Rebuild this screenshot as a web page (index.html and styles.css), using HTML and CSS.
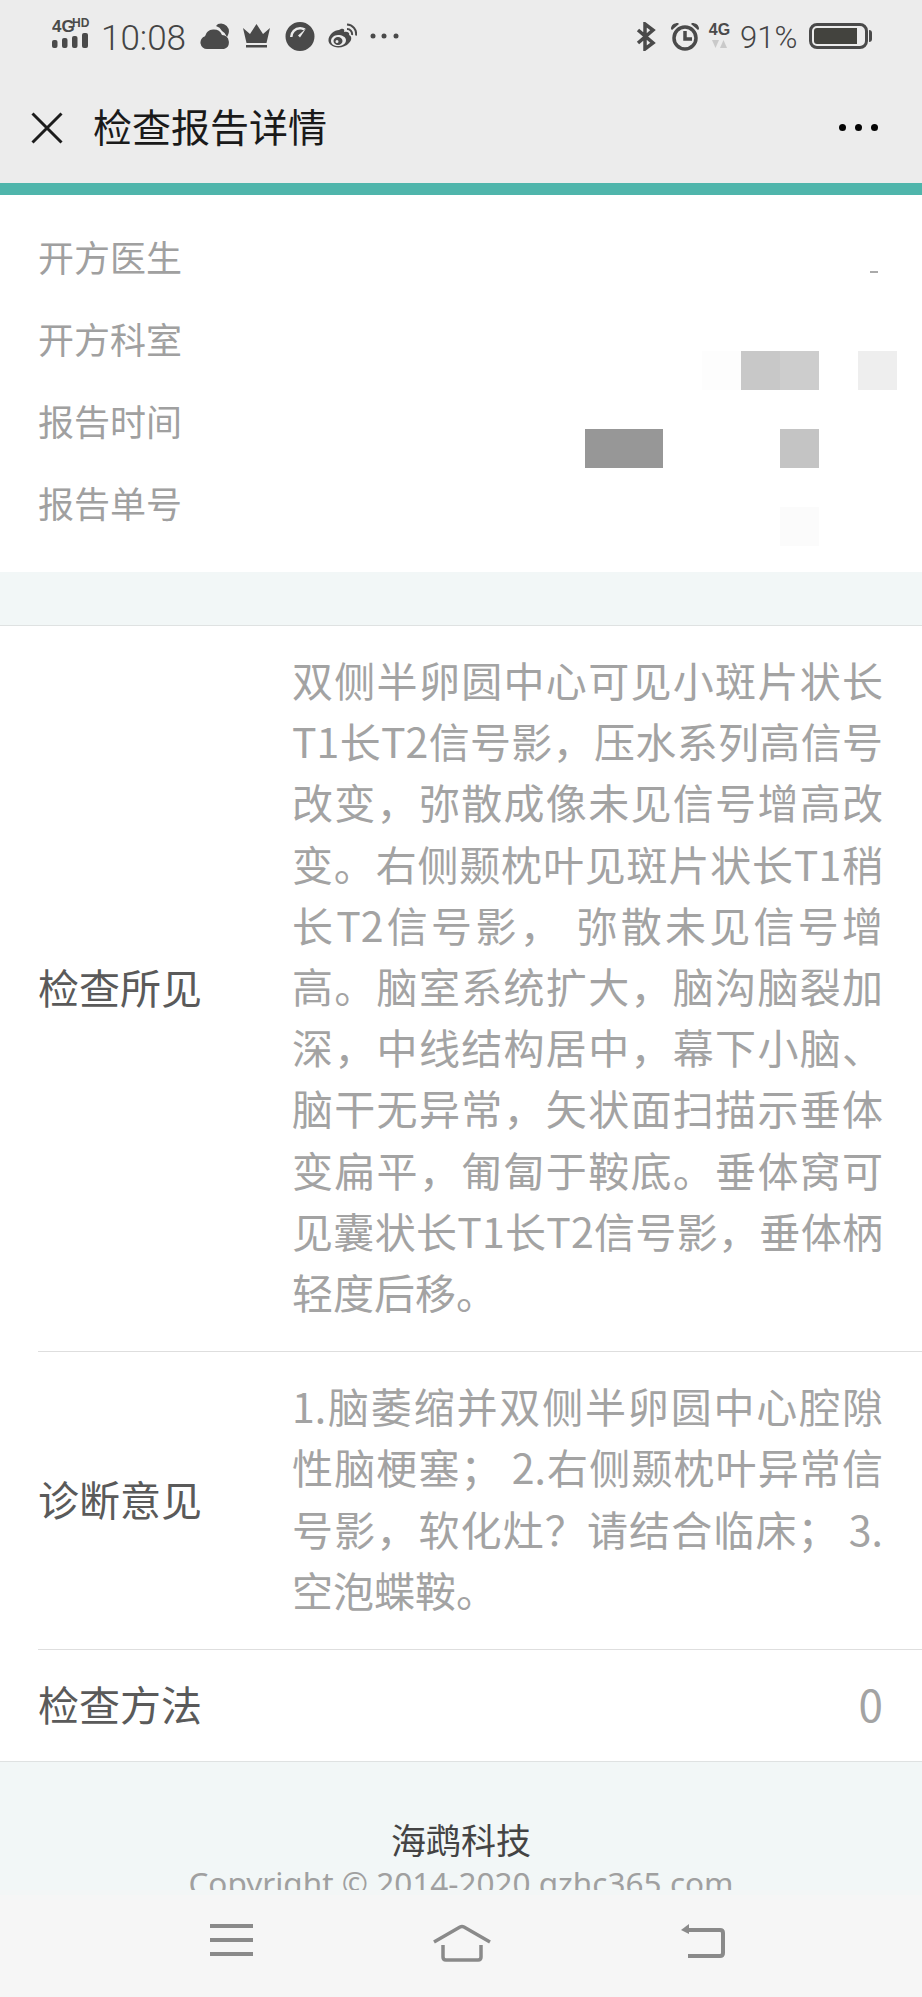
FILE: index.html
```html
<!DOCTYPE html>
<html lang="zh-CN">
<head>
    <meta charset="UTF-8">
    <meta name="viewport" content="width=device-width, initial-scale=1.0">
    <title>检查报告详情</title>
    <link rel="stylesheet" href="styles.css">
</head>

<body>
    <div class="phone">
        <div class="status-bar">
            <div class="status-left">
                <svg class="icon-signal" width="38" height="36" viewBox="0 0 38 36">
                    <text x="0" y="16" class="net-big">4G</text>
                    <text x="20" y="11" class="net-small">HD</text>
                    <rect x="0" y="24" width="5.500" height="8" rx="2"/>
                    <rect x="10" y="22" width="5.500" height="10" rx="2"/>
                    <rect x="20" y="20" width="5.500" height="12" rx="2"/>
                    <rect x="30" y="17" width="6" height="15" rx="2"/>
                </svg>
                <span class="clock">10:08</span>
                <svg class="icon-cloud" width="30" height="27" viewBox="0 0 30 27">
                    <path d="M18 1a8 8 0 0 1 10 11l-1 2a10 10 0 0 0-5-6a10 10 0 0 0-6-5z"/>
                    <path d="M7 26a6.500 6.500 0 0 1-2-12.700a9 9 0 0 1 17-1.300a7.200 7.200 0 0 1 2 14z"/>
                </svg>
                <svg class="icon-crown" width="27" height="24" viewBox="0 0 27 24">
                    <path d="M0 4l7 6l6.500-10l6.500 10l7-6l-3.500 15h-20z"/>
                    <rect x="3" y="21" width="21" height="2.500"/>
                </svg>
                <svg class="icon-gauge" width="30" height="29" viewBox="0 0 30 29">
                    <path fill-rule="evenodd" d="M15 0a14.500 14.500 0 1 1 0 29a14.500 14.500 0 0 1 0-29zM15 5a10 10 0 0 0-10 10h2.500a7.500 7.500 0 0 1 7.500-7.500c1.500 0 2.500 .3 3.500 1l2-2a10 10 0 0 0-5.500-1.500z"/>
                    <path class="cut" d="M21 6.500l-6 9l-2-2z"/>
                </svg>
                <svg class="icon-weibo" width="29" height="26" viewBox="0 0 29 26">
                    <path fill-rule="evenodd" d="M11 7c4-2.500 6-1 5 2c4-1 6 1 5 3c3 1 3 5 0 8c-4 5-14 6-18 2c-4-3-3-8 1-12c2-2 5-3 7-3zM10 12c-4 0-7 3-7 6c0 3 3 5 7 5c4 0 8-2 8-6c0-3-4-5-8-5z"/>
                    <path fill-rule="evenodd" d="M10 14a4.500 4 0 1 1 0 8a4.500 4 0 0 1 0-8zM9 17a1.500 1.500 0 1 0 0 3a1.500 1.500 0 0 0 0-3z"/>
                    <path class="line" d="M19 6a5 5 0 0 1 5 6M19 1.500a9.500 9.500 0 0 1 9 11"/>
                </svg>
                <svg class="icon-more" width="29" height="6" viewBox="0 0 29 6">
                    <circle cx="3" cy="3" r="2.500"/><circle cx="14" cy="3" r="2.500"/><circle cx="26" cy="3" r="2.500"/>
                </svg>
            </div>
            <div class="status-right">
                <svg class="icon-bt" width="20" height="29" viewBox="0 0 20 29">
                    <path class="line-bold" d="M2 8l15 13l-8 6v-25l8 6l-15 13"/>
                </svg>
                <svg class="icon-alarm" width="30" height="29" viewBox="0 0 30 29">
                    <circle class="line-bold" cx="15" cy="16" r="11"/>
                    <path class="line-bold" d="M15 9v8h7"/>
                    <path d="M1 7c0-4 3-6 7-6l1 1l-7 6zM29 7c0-4-3-6-7-6l-1 1l7 6z"/>
                </svg>
                <div class="net-wrap">
                    <span class="net-label">4G</span>
                    <svg width="16" height="9" viewBox="0 0 16 9">
                        <path class="arrow-down" d="M0 0h7l-3.500 8z"/>
                        <path class="arrow-up" d="M8 8h7l-3.500-8z"/>
                    </svg>
                </div>
                <span class="battery-text">91%</span>
                <div class="battery">
                    <div class="battery-fill"></div>
                </div>
                <div class="battery-tip"></div>
            </div>
        </div>

        <div class="app-bar">
            <svg class="icon-close" width="32" height="32" viewBox="0 0 32 32">
                <path d="M1.500 1.500l29 29M30.500 1.500l-29 29"/>
            </svg>
            <h1 class="page-title">检查报告详情</h1>
            <div class="app-more">
                <span></span><span></span><span></span>
            </div>
        </div>

        <div class="info">
            <div class="info-row">开方医生</div>
            <div class="info-row">开方科室</div>
            <div class="info-row">报告时间</div>
            <div class="info-row">报告单号</div>
            <!-- mosaic over the private values -->
            <div class="speck"></div>
            <div class="mosaic">
                <span></span><span></span><span></span><span class="m-fd"></span><span class="m-c8"></span><span class="m-cd"></span><span></span><span class="m-ee"></span>
                <span class="m-97"></span><span class="m-97"></span><span></span><span></span><span></span><span class="m-c4"></span><span></span><span></span>
                <span></span><span></span><span></span><span></span><span></span><span class="m-faint"></span><span></span><span></span>
            </div>
        </div>

        <div class="gap"></div>

        <div class="results">
            <div class="result-row">
                <div class="result-label">检查所见</div>
                <div class="result-text">双侧半卵圆中心可见小斑片状长T1长T2信号影，压水系列高信号改变，弥散成像未见信号增高改变。右侧颞枕叶见斑片状长T1稍长T2信号影， 弥散未见信号增高。脑室系统扩大，脑沟脑裂加深，中线结构居中，幕下小脑、脑干无异常，矢状面扫描示垂体变扁平，匍匐于鞍底。垂体窝可见囊状长T1长T2信号影，垂体柄轻度后移。</div>
            </div>
            <div class="result-row">
                <div class="result-label">诊断意见</div>
                <div class="result-text">1.脑萎缩并双侧半卵圆中心腔隙性脑梗塞； 2.右侧颞枕叶异常信号影，软化灶？请结合临床； 3.空泡蝶鞍。</div>
            </div>
            <div class="result-row method-row">
                <div class="result-label">检查方法</div>
                <div class="method-value">0</div>
            </div>
        </div>

        <div class="footer">
            <div class="footer-name">海鹉科技</div>
            <div class="footer-copy">Copyright © 2014-2020 gzhc365.com</div>
        </div>

        <div class="nav-bar">
            <svg width="43" height="32" viewBox="0 0 43 32">
                <path d="M0 2h43M0 16h43M0 30h43"/>
            </svg>
            <svg class="nav-home" width="60" height="38" viewBox="0 0 60 38">
                <path d="M2 18l26-15q2-1 4 0l26 15"/>
                <path d="M11 21v12q0 3 3 3h32q3 0 3-3v-12"/>
            </svg>
            <svg class="nav-back" width="44" height="35" viewBox="0 0 44 35">
                <path d="M8 6h31q3 0 3 3v20q0 3-3 3h-32"/>
                <path class="nav-arrow" d="M8 0v10l-8-4z"/>
            </svg>
        </div>
    </div>
</body>

</html>
```

FILE: styles.css
```css
* {
    box-sizing: border-box;
}

body {
    margin: 0;
    font-family: "Noto Sans CJK SC", "Noto Sans", sans-serif;
    background-color: white;
}

.phone {
    width: 922px;
    height: 1997px;
    overflow: hidden;
}

/* status bar */
.status-bar {
    height: 72px;
    background-color: #ececec;
    display: flex;
    justify-content: space-between;
    padding: 20px 50px 0 52px;
}

.status-left, .status-right {
    display: flex;
    align-items: flex-start;
    height: 32px;
}

.status-bar svg {
    fill: #4a4a4a;
    display: block;
    flex: none;
}

.status-bar .line, .status-bar .line-bold {
    fill: none;
    stroke: #4a4a4a;
}

.status-bar .line {
    stroke-width: 2;
}

.status-bar .line-bold {
    stroke-width: 3.5;
}

.status-bar .cut {
    fill: #ececec;
}

.net-big {
    font-family: "Liberation Sans", sans-serif;
    font-weight: bold;
    font-size: 17px;
}

.net-small {
    font-family: "Liberation Sans", sans-serif;
    font-weight: bold;
    font-size: 12px;
}

.icon-signal {
    margin-top: -4px;
}

.clock {
    font-family: "Roboto", sans-serif;
    font-weight: 300;
    font-size: 35px;
    line-height: 38px;
    color: #444;
    margin-left: 11px;
    width: 99px;
}

.icon-cloud {
    margin-top: 3px;
}

.icon-crown {
    margin: 4px 0 0 13px;
}

.icon-gauge {
    margin: 2px 0 0 15px;
}

.icon-weibo {
    margin: 3px 0 0 13px;
}

.icon-more {
    margin: 13px 0 0 13px;
}

.icon-bt {
    margin-top: 2px;
}

.icon-alarm {
    margin: 2px 0 0 14px;
}

.net-wrap {
    margin: 2px 0 0 9px;
    width: 21px;
    display: flex;
    flex-direction: column;
    align-items: center;
}

.net-label {
    font-family: "Liberation Sans", sans-serif;
    font-weight: bold;
    font-size: 16px;
    line-height: 16px;
    color: #4a4a4a;
}

.status-bar .net-wrap svg {
    margin-top: 2px;
    fill: #c9c9c9;
}

.battery-text {
    font-family: "Roboto", sans-serif;
    font-weight: 300;
    font-size: 31px;
    line-height: 36px;
    color: #444;
    margin-left: 10px;
    width: 69px;
}

.battery {
    width: 59px;
    height: 26px;
    margin-top: 3px;
    border: 3px solid #4a4a4a;
    border-radius: 8px;
    padding: 2px 8px 2px 2px;
}

.battery-fill {
    height: 100%;
    background-color: #43433e;
    border-radius: 3px 0 0 3px;
}

.battery-tip {
    width: 3px;
    height: 12px;
    margin: 10px 0 0 1px;
    background-color: #4a4a4a;
    border-radius: 0 3px 3px 0;
}

/* app bar */
.app-bar {
    height: 123px;
    background-color: #ececec;
    border-bottom: 12px solid #4fb5ab;
    display: flex;
    align-items: center;
    padding: 0 44px 0 31px;
}

.icon-close {
    fill: none;
    stroke: #1c1c1c;
    stroke-width: 3;
    flex: none;
}

.page-title {
    margin: 0 0 5px 30px;
    font-size: 39px;
    font-weight: normal;
    line-height: 50px;
    color: #1a1a1a;
    flex: 1;
}

.app-more {
    display: flex;
    gap: 9px;
}

.app-more span {
    width: 7px;
    height: 7px;
    border-radius: 50%;
    background-color: #050505;
}

/* info block */
.info {
    position: relative;
    padding: 20px 38px 29px;
    background-color: white;
}

.info-row {
    height: 82px;
    line-height: 82px;
    font-size: 36px;
    color: #a0a0a0;
}

.speck {
    position: absolute;
    left: 870px;
    top: 76px;
    width: 8px;
    height: 2px;
    background-color: #aaa;
}

.mosaic {
    position: absolute;
    left: 585px;
    top: 156px;
    display: grid;
    grid-template-columns: repeat(8, 39px);
    grid-auto-rows: 39px;
    row-gap: 39px;
}

.m-fd {
    background-color: #fdfdfd;
}

.m-faint {
    background-color: #fbfbfb;
}

.m-c8 {
    background-color: #c8c8c8;
}

.m-cd {
    background-color: #cdcdcd;
}

.m-ee {
    background-color: #eeeeee;
}

.m-97 {
    background-color: #979797;
}

.m-c4 {
    background-color: #c4c4c4;
}

.gap {
    height: 54px;
    background-color: #f2f7f7;
    border-bottom: 1px solid #dfe2e2;
}

/* result rows */
.results {
    background-color: white;
    padding-left: 38px;
}

.result-row {
    display: flex;
    align-items: center;
    padding: 23px 39px 29px 0;
    border-bottom: 1px solid #dedede;
}

.result-row:last-child {
    border-bottom: none;
}

.result-label {
    width: 254px;
    flex: none;
    font-size: 41px;
    color: #5a5a5a;
}

.result-text {
    flex: 1;
    font-size: 41px;
    line-height: 61.200px;
    color: #a3a3a3;
    text-align: justify;
}

.method-row {
    height: 111px;
    padding-top: 0;
    padding-bottom: 6px;
}

.method-value {
    flex: 1;
    text-align: right;
    font-size: 44px;
    color: #a3a3a3;
}

/* footer */
.footer {
    height: 129px;
    overflow: hidden;
    background-color: #f2f7f7;
    border-top: 1px solid #dfe2e2;
    text-align: center;
    padding-top: 53px;
}

.footer-name {
    font-size: 35px;
    line-height: 48px;
    color: #444;
}

.footer-copy {
    font-family: "Noto Sans", sans-serif;
    font-size: 31.500px;
    line-height: 40px;
    color: #a0a0a0;
}

/* phone nav */
.nav-bar {
    height: 107px;
    background-color: #f6f6f6;
    border-top: 5px solid #f3f6f6;
    display: flex;
    align-items: flex-start;
    padding: 29px 0 0 210px;
}

.nav-bar svg {
    fill: none;
    stroke: #8a8a8a;
    stroke-width: 4;
    flex: none;
}

.nav-bar .nav-home {
    margin-left: 179px;
    stroke-width: 3.5;
}

.nav-bar .nav-back {
    margin-left: 189px;
}

.nav-bar .nav-arrow {
    fill: #8a8a8a;
    stroke: none;
}
```
